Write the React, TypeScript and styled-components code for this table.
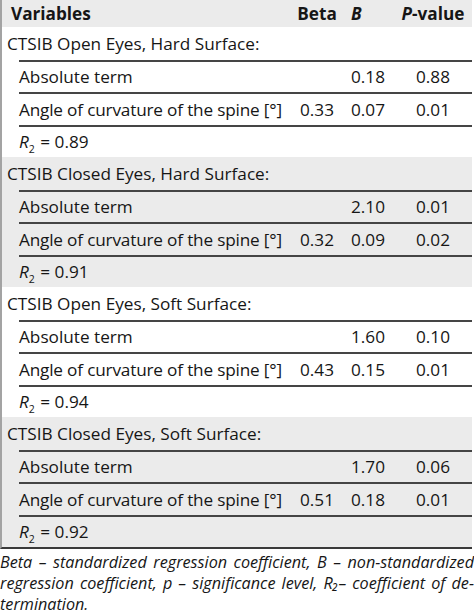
import React from "react";
import styled, { createGlobalStyle } from "styled-components";

const GlobalStyle = createGlobalStyle`
  html, body {
    margin: 0;
    padding: 0;
    background: #ffffff;
  }
  body {
    font-family: "Open Sans", "Noto Sans", sans-serif;
    color: #161616;
  }
`;

const Page = styled.div`
  width: 474px;
  display: flex;
  flex-direction: column;
`;

const Table = styled.div`
  display: flex;
  flex-direction: column;
  border-left: 2px solid #a3a3a3;
  border-bottom: 2px solid #3a3a3a;
  margin-right: 2px;
`;

const Section = styled.div<{ $shaded?: boolean }>`
  display: flex;
  flex-direction: column;
  background: ${(p) => (p.$shaded ? "#ebebeb" : "#ffffff")};
`;

const Row = styled.div<{ $indent?: boolean; $ruled?: boolean; $height?: number }>`
  box-sizing: border-box;
  height: ${(p) => p.$height ?? 32.5}px;
  display: grid;
  grid-template-columns: minmax(0, 1fr) 68px 54px 56px;
  align-items: center;
  margin-left: ${(p) => (p.$indent ? 17 : 0)}px;
  padding-left: ${(p) => (p.$indent ? 0 : 5)}px;
  padding-right: 11px;
  border-top: ${(p) => (p.$ruled ? "2px solid #454545" : "none")};
  font-size: 17.2px;
  white-space: nowrap;
`;

const HeadRow = styled(Row)`
  font-weight: 700;
  padding-left: 9px;
`;

const Cell = styled.span<{ $align?: "start" | "center" }>`
  justify-self: ${(p) => p.$align ?? "center"};
`;

const Label = styled.span<{ $tight?: boolean }>`
  justify-self: start;
  letter-spacing: ${(p) => (p.$tight ? "-0.18px" : "normal")};
`;

const Ital = styled.i`
  font-style: italic;
`;

const Sub = styled.span`
  display: inline-block;
  font-size: 10.5px;
  line-height: 1;
  transform: translateY(5px);
  margin-right: 1px;
`;

const Note = styled.p`
  margin: 3px 0 0;
  font-size: 16.2px;
  font-style: italic;
  line-height: 21px;
  text-align: justify;
  color: #161616;
`;

type Group = {
  title: string;
  abs: [string, string];
  angle: [string, string, string];
  r2: string;
  shaded?: boolean;
};

const groups: Group[] = [
  { title: "CTSIB Open Eyes, Hard Surface:", abs: ["0.18", "0.88"], angle: ["0.33", "0.07", "0.01"], r2: "0.89" },
  { title: "CTSIB Closed Eyes, Hard Surface:", abs: ["2.10", "0.01"], angle: ["0.32", "0.09", "0.02"], r2: "0.91", shaded: true },
  { title: "CTSIB Open Eyes, Soft Surface:", abs: ["1.60", "0.10"], angle: ["0.43", "0.15", "0.01"], r2: "0.94" },
  { title: "CTSIB Closed Eyes, Soft Surface:", abs: ["1.70", "0.06"], angle: ["0.51", "0.18", "0.01"], r2: "0.92", shaded: true },
];

const R2 = ({ value }: { value: string }) => (
  <Label>
    <Ital>R</Ital>
    <Sub>2</Sub> = {value}
  </Label>
);

export default function App() {
  return (
    <Page>
      <GlobalStyle />
      <Table>
        <Section $shaded>
          <HeadRow $height={27}>
            <Label>Variables</Label>
            <Cell>Beta</Cell>
            <Cell $align="start">
              <Ital>B</Ital>
            </Cell>
            <Cell>
              <Ital>P</Ital>-value
            </Cell>
          </HeadRow>
        </Section>
        {groups.map((g) => (
          <Section key={g.title} $shaded={g.shaded}>
            <Row>
              <Label>{g.title}</Label>
            </Row>
            <Row $indent $ruled>
              <Label>Absolute term</Label>
              <Cell />
              <Cell $align="start">{g.abs[0]}</Cell>
              <Cell>{g.abs[1]}</Cell>
            </Row>
            <Row $indent $ruled>
              <Label $tight>Angle of curvature of the spine [°]</Label>
              <Cell>{g.angle[0]}</Cell>
              <Cell $align="start">{g.angle[1]}</Cell>
              <Cell>{g.angle[2]}</Cell>
            </Row>
            <Row $indent $ruled>
              <R2 value={g.r2} />
            </Row>
          </Section>
        ))}
      </Table>
      <Note>
        Beta – standardized regression coefficient, B – non-standardized regression coefficient, p – significance level,
        R₂– coefficient of de­termination.
      </Note>
    </Page>
  );
}
